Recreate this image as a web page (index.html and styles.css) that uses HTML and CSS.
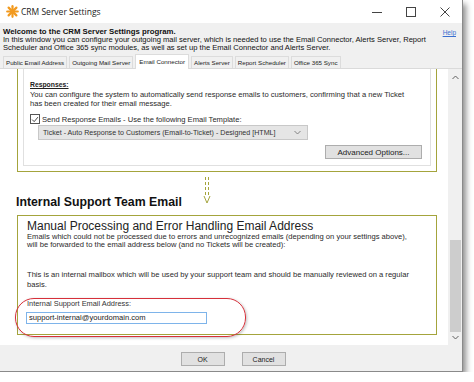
FILE: index.html
```html
<!DOCTYPE html>
<html lang="en">
<head>
    <meta charset="UTF-8">
    <title>CRM Server Settings</title>
    <link rel="stylesheet" href="styles.css">
</head>
<body>
    <div class="window">
        <div class="titlebar">
            <svg class="app-icon" width="13" height="13" viewBox="0 0 13 13">
                <g stroke="#f29a1f" stroke-width="2.2" stroke-linecap="round">
                    <line x1="6.5" y1="1.2" x2="6.5" y2="11.8"/>
                    <line x1="1.2" y1="6.5" x2="11.8" y2="6.5"/>
                    <line x1="2.6" y1="2.6" x2="10.4" y2="10.4"/>
                    <line x1="10.4" y1="2.6" x2="2.6" y2="10.4"/>
                </g>
            </svg>
            <span class="title">CRM Server Settings</span>
            <div class="controls">
                <span class="ctl">
                    <svg width="10" height="10" viewBox="0 0 10 10"><line x1="0" y1="5.5" x2="10" y2="5.5" stroke="#444" stroke-width="1"/></svg>
                </span>
                <span class="ctl">
                    <svg width="10" height="10" viewBox="0 0 10 10"><rect x="0.5" y="0.5" width="9" height="9" fill="none" stroke="#444" stroke-width="1"/></svg>
                </span>
                <span class="ctl">
                    <svg width="10" height="10" viewBox="0 0 10 10"><path d="M0.5 0.5 L9.5 9.5 M9.5 0.5 L0.5 9.5" stroke="#444" stroke-width="1"/></svg>
                </span>
            </div>
        </div>

        <div class="header">
            <div class="intro">
                <p class="intro-title">Welcome to the CRM Server Settings program.</p>
                <p>In this window you can configure your outgoing mail server, which is needed to use the Email Connector, Alerts Server, Report<br>Scheduler and Office 365 sync modules, as well as set up the Email Connector and Alerts Server.</p>
            </div>
            <a class="help" href="#">Help</a>
        </div>

        <div class="tabs">
            <span class="tab">Public Email Address</span>
            <span class="tab">Outgoing Mail Server</span>
            <span class="tab active">Email Connector</span>
            <span class="tab">Alerts Server</span>
            <span class="tab">Report Scheduler</span>
            <span class="tab">Office 365 Sync</span>
        </div>

        <div class="main">
            <div class="pane">
                <div class="group group-top">
                    <div class="panel">
                        <p class="sub-title">Responses:</p>
                        <p class="text">You can configure the system to automatically send response emails to customers, confirming that a new Ticket<br>has been created for their email message.</p>
                        <div class="check-row">
                            <span class="checkbox">
                                <svg width="9" height="9" viewBox="0 0 9 9"><path d="M1.3 4.6 L3.6 6.9 L7.8 1.8" fill="none" stroke="#333" stroke-width="1"/></svg>
                            </span>
                            <span>Send Response Emails - Use the following Email Template:</span>
                        </div>
                        <div class="select">
                            <span>Ticket - Auto Response to Customers (Email-to-Ticket) - Designed [HTML]</span>
                            <svg width="7" height="5" viewBox="0 0 7 5"><path d="M0.5 1 L3.5 4 L6.5 1" fill="none" stroke="#777" stroke-width="0.9"/></svg>
                        </div>
                        <div class="panel-actions">
                            <button class="btn btn-wide">Advanced Options...</button>
                        </div>
                    </div>
                </div>

                <div class="section-head">
                    <h2>Internal Support Team Email</h2>
                    <svg class="flow-arrow" width="8" height="27" viewBox="0 0 8 27">
                        <g stroke="#a4a43c" stroke-width="1">
                            <path d="M2.5 0 V18 M5.5 0 V18" stroke-dasharray="3 2"/>
                            <path d="M1 19 L4 26 L7 19" fill="none"/>
                        </g>
                    </svg>
                </div>

                <div class="group group-bottom">
                    <h3>Manual Processing and Error Handling Email Address</h3>
                    <p class="text">Emails which could not be processed due to errors and unrecognized emails (depending on your settings above),<br>will be forwarded to the email address below (and no Tickets will be created):</p>
                    <p class="text spaced">This is an internal mailbox which will be used by your support team and should be manually reviewed on a regular<br>basis.</p>
                    <div class="callout">
                        <label>Internal Support Email Address:</label>
                        <div class="input">support-internal@yourdomain.com</div>
                    </div>
                </div>
            </div>

            <div class="scrollbar">
                <svg class="sb-arrow" width="7" height="5" viewBox="0 0 7 5"><path d="M0.5 4 L3.5 1 L6.5 4" fill="none" stroke="#606060" stroke-width="1"/></svg>
                <div class="sb-track"></div>
                <div class="sb-thumb"></div>
                <svg class="sb-arrow" width="7" height="5" viewBox="0 0 7 5"><path d="M0.5 1 L3.5 4 L6.5 1" fill="none" stroke="#606060" stroke-width="1"/></svg>
            </div>
        </div>

        <div class="footer">
            <button class="btn">OK</button>
            <button class="btn">Cancel</button>
        </div>
    </div>
</body>
</html>
```

FILE: styles.css
```css
* {
    margin: 0;
    padding: 0;
    box-sizing: border-box;
}

body {
    background: #ffffff;
    font-family: 'Liberation Sans', Arial, sans-serif;
    color: #222;
}

.window {
    width: 463px;
    height: 372px;
    background: #ffffff;
    border-right: 1px solid #8a8a8a;
    border-bottom: 1px solid #8a8a8a;
    box-shadow: 3px 4px 6px rgba(0, 0, 0, 0.45);
    display: flex;
    flex-direction: column;
}

/* Title bar */
.titlebar {
    height: 23px;
    display: flex;
    align-items: center;
    padding-left: 6px;
}

.app-icon {
    margin-right: 2px;
}

.title {
    font-family: 'Open Sans', sans-serif;
    font-size: 8.5px;
    color: #222;
}

.controls {
    margin-left: auto;
    display: flex;
}

.ctl {
    width: 34px;
    height: 23px;
    display: flex;
    align-items: center;
    justify-content: center;
}

/* Header */
.header {
    background: #f0f0f0;
    display: flex;
    justify-content: space-between;
    padding: 5px 6px 0 3px;
    height: 32px;
}

.intro p {
    font-size: 7.6px;
    line-height: 8px;
    color: #111;
}

.intro .intro-title {
    font-weight: bold;
    font-size: 7.8px;
}

.help {
    font-size: 6.5px;
    color: #3a6fd0;
    text-decoration: underline;
    margin-top: 1px;
}

/* Tabs */
.tabs {
    height: 14px;
    background: #f0f0f0;
    display: flex;
    align-items: flex-end;
    padding-left: 3px;
    border-bottom: 1px solid #dadada;
}

.tab {
    font-size: 6.2px;
    color: #222;
    height: 12px;
    line-height: 11px;
    padding: 0 2px;
    margin-right: 2px;
    border: 1px solid #dcdcdc;
    border-bottom: none;
    background: #f0f0f0;
}

.tab.active {
    background: #ffffff;
    height: 15px;
    line-height: 13px;
    margin-bottom: -1px;
    padding: 0 3px;
}

/* Main area */
.main {
    height: 276px;
    display: flex;
}

.pane {
    width: 448px;
    background: #ffffff;
}

.group {
    margin-left: 17px;
    width: 420px;
    border: 1px solid #a4a43c;
}

.group-top {
    border-top: none;
    padding: 0 5px 5px;
}

.group-bottom {
    height: 120px;
    padding: 5px 9px 0;
}

.panel {
    border: 1px solid #e0e0e0;
    border-top: none;
    padding: 12px 6px 6px;
}

.sub-title {
    font-size: 6.8px;
    font-weight: bold;
    text-decoration: underline;
    line-height: 8px;
    margin-bottom: 2px;
    color: #222;
}

.text {
    font-size: 7.6px;
    line-height: 8.5px;
    color: #2a2a2a;
}

.group-bottom .text {
    line-height: 8px;
}

.group-bottom .spaced {
    margin-top: 21px;
    line-height: 10px;
}

.check-row {
    display: flex;
    align-items: center;
    font-size: 7.6px;
    color: #2a2a2a;
    margin-top: 6px;
}

.checkbox {
    width: 10px;
    height: 10px;
    border: 1px solid #555;
    background: #fff;
    display: flex;
    align-items: center;
    justify-content: center;
    margin-right: 2px;
}

.select {
    margin: 1px 0 0 8px;
    width: 270px;
    height: 15px;
    background: #e5e5e5;
    border: 1px solid #c8c8c8;
    display: flex;
    align-items: center;
    justify-content: space-between;
    padding: 0 6px 0 4px;
    font-size: 7.1px;
    color: #333;
}

.panel-actions {
    display: flex;
    justify-content: flex-end;
    margin-top: 5px;
    padding-right: 2px;
}

.btn {
    font-family: 'Liberation Sans', Arial, sans-serif;
    font-size: 7px;
    color: #222;
    background: #e1e1e1;
    border: 1px solid #adadad;
    width: 44px;
    height: 14px;
}

.btn-wide {
    width: 97px;
    font-size: 8px;
}

/* Section heading with flow arrow */
.section-head {
    display: flex;
    align-items: flex-end;
    margin: 5px 0 6px 16px;
}

h2 {
    font-size: 12.3px;
    font-weight: bold;
    color: #111;
    line-height: 14px;
    width: 187px;
}

.flow-arrow {
    margin-bottom: 5px;
}

h3 {
    font-size: 12px;
    font-weight: normal;
    color: #222;
    line-height: 11px;
    margin-bottom: 1px;
}

.callout {
    margin: 8px 0 0 -12px;
    width: 231px;
    height: 39px;
    border: 1.5px solid #d6303a;
    border-radius: 19px;
    box-shadow: 1px 1px 3px rgba(0, 0, 0, 0.25);
    padding: 0.5px 0 0 10px;
}

.callout label {
    display: block;
    font-size: 7.4px;
    line-height: 8px;
    color: #333;
    margin-left: 1px;
}

.input {
    margin-top: 4px;
    width: 181px;
    height: 12px;
    border: 1px solid #7eb4ea;
    font-size: 7.6px;
    line-height: 10px;
    padding-left: 2px;
    color: #222;
}

/* Scrollbar */
.scrollbar {
    width: 14px;
    background: #f0f0f0;
    display: flex;
    flex-direction: column;
    align-items: center;
    padding: 6px 0 5px;
}

.sb-track {
    flex: 1;
}

.sb-thumb {
    width: 11px;
    height: 92px;
    background: #cdcdcd;
    margin-bottom: 3px;
}

/* Footer */
.footer {
    flex: 1;
    background: #f0f0f0;
    display: flex;
    justify-content: center;
    gap: 17px;
    padding: 7px 0 0 4px;
}
```
